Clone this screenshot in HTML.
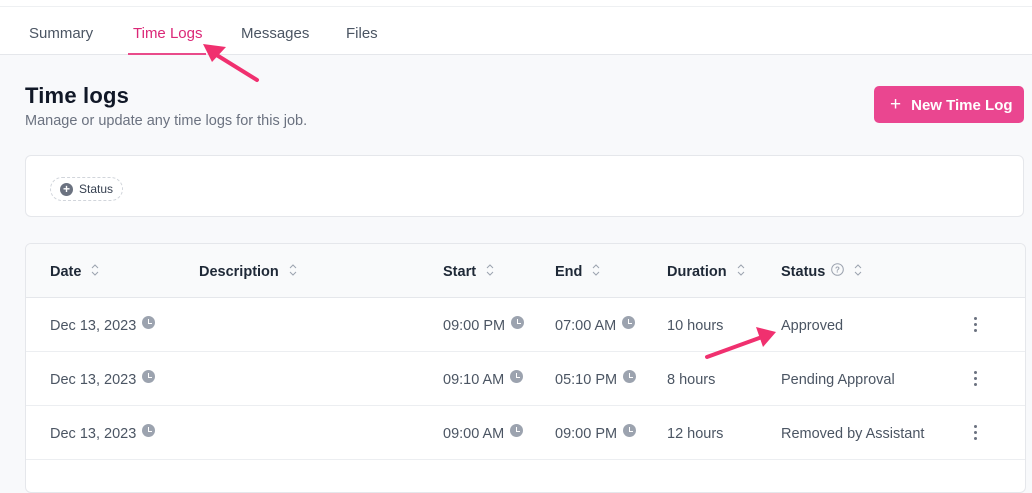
<!DOCTYPE html>
<html><head><style>
*{box-sizing:border-box;margin:0;padding:0}
body{width:1032px;height:477px;overflow:hidden;background:#f8f9fb;font-family:"Liberation Sans",sans-serif;position:relative}
.top{position:absolute;left:0;top:0;width:1032px;height:55px;background:#fff;border-bottom:1px solid #e5e7eb}
.top:before{content:"";position:absolute;left:0;right:0;top:6px;border-top:1px solid #eef0f2}
.tab{position:absolute;top:25px;font-size:15px;color:#4b5563}
.a{position:absolute}
h1{position:absolute;left:25px;top:83px;font-size:22px;font-weight:bold;color:#111827;letter-spacing:.2px}
.sub{position:absolute;left:25px;top:113px;font-size:14.5px;color:#6b7280}
.btn{position:absolute;left:874px;top:86px;width:150px;height:37px;background:#ea4690;border-radius:5px;color:#fff;font-size:15px;font-weight:bold;line-height:37px;padding-left:16px}
.card{position:absolute;left:25px;top:155px;width:999px;height:62px;background:#fff;border:1px solid #e5e7eb;border-radius:6px}
.chip{position:absolute;left:24px;top:21px;width:73px;height:24px;border:1px dashed #d1d5db;border-radius:12px;font-size:12px;color:#374151;line-height:22px;padding-left:28px}
.chip i{position:absolute;left:9px;top:5px;width:13px;height:13px;border-radius:50%;background:#6b7280;color:#fff;font-style:normal;font-size:12px;line-height:12px;text-align:center;font-weight:bold}
.tbl{position:absolute;left:25px;top:243px;width:1001px;height:250px;background:#fff;border:1px solid #e5e7eb;border-radius:6px;overflow:hidden}
.hd{position:absolute;left:0;top:0;width:100%;height:54px;background:#f9fafb;border-bottom:1px solid #e5e7eb}
.row{position:absolute;left:0;width:100%;height:54px;border-bottom:1px solid #eceef1}
.t{position:absolute;font-size:14.5px;white-space:nowrap}
.h{top:20px;color:#1f2937;font-weight:bold}
.c{top:20px;color:#4b5563}
.s{display:inline-block;vertical-align:middle;margin-left:10px;width:8px;height:12px;position:relative;top:-2px}
.clk{display:inline-block;width:13px;height:13px;border-radius:50%;background:#9ca3af;position:relative;margin-left:6px;top:-4px;vertical-align:middle}
.clk:after{content:"";position:absolute;left:6px;top:3px;width:3px;height:4px;border-left:1.5px solid #fff;border-bottom:1.5px solid #fff}
.dots{position:absolute;left:948px;top:19px;width:4px}
.dots b{display:block;width:3px;height:3px;background:#6b7280;border-radius:50%;margin-bottom:3px}
</style></head><body>
<div class="top">
<span class="tab" style="left:29px">Summary</span>
<span class="tab" style="left:133px;color:#db2777">Time Logs</span>
<span class="tab" style="left:241px">Messages</span>
<span class="tab" style="left:346px">Files</span>
<div class="a" style="left:128px;top:53px;width:78px;height:2px;background:#e94b8a"></div>
</div>
<h1>Time logs</h1>
<div class="sub">Manage or update any time logs for this job.</div>
<div class="btn"><span style="font-weight:normal;font-size:19px;margin-right:10px">+</span>New Time Log</div>
<div class="card"><div class="chip"><i>+</i>Status</div></div>
<div class="tbl">
<div class="hd">
<span class="t h" style="left:24px">Date<svg class="s" viewBox="0 0 8 12"><path d="M1 4l3-3 3 3M1 8l3 3 3-3" fill="none" stroke="#9ca3af" stroke-width="1"/></svg></span>
<span class="t h" style="left:173px">Description<svg class="s" viewBox="0 0 8 12"><path d="M1 4l3-3 3 3M1 8l3 3 3-3" fill="none" stroke="#9ca3af" stroke-width="1"/></svg></span>
<span class="t h" style="left:417px">Start<svg class="s" viewBox="0 0 8 12"><path d="M1 4l3-3 3 3M1 8l3 3 3-3" fill="none" stroke="#9ca3af" stroke-width="1"/></svg></span>
<span class="t h" style="left:529px">End<svg class="s" viewBox="0 0 8 12"><path d="M1 4l3-3 3 3M1 8l3 3 3-3" fill="none" stroke="#9ca3af" stroke-width="1"/></svg></span>
<span class="t h" style="left:641px">Duration<svg class="s" viewBox="0 0 8 12"><path d="M1 4l3-3 3 3M1 8l3 3 3-3" fill="none" stroke="#9ca3af" stroke-width="1"/></svg></span>
<span class="t h" style="left:755px">Status <svg width="13" height="13" viewBox="0 0 13 13" style="vertical-align:middle;position:relative;top:-3px;margin-left:2px"><circle cx="6.5" cy="6.5" r="5.8" fill="none" stroke="#9ca3af"/><text x="6.5" y="9.5" font-size="8" text-anchor="middle" fill="#9ca3af" font-family="Liberation Sans">?</text></svg><svg class="s" viewBox="0 0 8 12"><path d="M1 4l3-3 3 3M1 8l3 3 3-3" fill="none" stroke="#9ca3af" stroke-width="1"/></svg></span>
</div>
<div class="row" style="top:54px">
<span class="t c" style="left:24px">Dec 13, 2023<i class="clk"></i></span>
<span class="t c" style="left:417px">09:00 PM<i class="clk"></i></span>
<span class="t c" style="left:529px">07:00 AM<i class="clk"></i></span>
<span class="t c" style="left:641px">10 hours</span>
<span class="t c" style="left:755px">Approved</span>
<div class="dots"><b></b><b></b><b></b></div>
</div>
<div class="row" style="top:108px">
<span class="t c" style="left:24px">Dec 13, 2023<i class="clk"></i></span>
<span class="t c" style="left:417px">09:10 AM<i class="clk"></i></span>
<span class="t c" style="left:529px">05:10 PM<i class="clk"></i></span>
<span class="t c" style="left:641px">8 hours</span>
<span class="t c" style="left:755px">Pending Approval</span>
<div class="dots"><b></b><b></b><b></b></div>
</div>
<div class="row" style="top:162px">
<span class="t c" style="left:24px">Dec 13, 2023<i class="clk"></i></span>
<span class="t c" style="left:417px">09:00 AM<i class="clk"></i></span>
<span class="t c" style="left:529px">09:00 PM<i class="clk"></i></span>
<span class="t c" style="left:641px">12 hours</span>
<span class="t c" style="left:755px">Removed by Assistant</span>
<div class="dots"><b></b><b></b><b></b></div>
</div>
</div>
<svg class="a" style="left:0;top:0" width="1032" height="477">
<path d="M257 80 L215 54" stroke="#f0306f" stroke-width="4" stroke-linecap="round"/>
<path d="M203 44 L226 47 L212 62 Z" fill="#f0306f"/>
<path d="M707 357 L762 337" stroke="#f0306f" stroke-width="4" stroke-linecap="round"/>
<path d="M776 332 L756 327 L763 347 Z" fill="#f0306f"/>
</svg>
</body></html>
